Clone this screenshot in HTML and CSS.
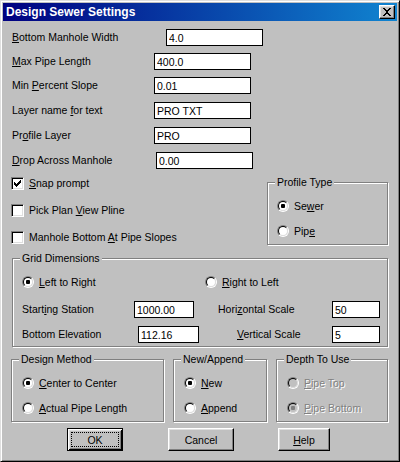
FILE: index.html
```html
<!DOCTYPE html>
<html>
<head>
<meta charset="utf-8">
<title>Design Sewer Settings</title>
<link rel="stylesheet" href="styles.css">
</head>
<body>
<div class="window">
  <div class="titlebar">
    <span class="title">Design Sewer Settings</span>
    <span class="close"><svg width="10" height="8" viewBox="0 0 10 8"><path d="M1 0h2v1h1v1h2v-1h1v-1h2v1h-1v1h-1v1h-1v2h1v1h1v1h1v1h-2v-1h-1v-1h-2v1h-1v1h-2v-1h1v-1h1v-1h1v-2h-1v-1h-1v-1h-1z" fill="#000"/></svg></span>
  </div>
  <div class="client">
    <div class="fields">
      <div class="frow"><span class="lbl lbl-a"><u>B</u>ottom Manhole Width</span><input class="tb" type="text" value="4.0"></div>
      <div class="frow"><span class="lbl"><u>M</u>ax Pipe Length</span><input class="tb" type="text" value="400.0"></div>
      <div class="frow"><span class="lbl">Min <u>P</u>ercent Slope</span><input class="tb" type="text" value="0.01"></div>
      <div class="frow loose"><span class="lbl">Layer name <u>f</u>or text</span><input class="tb" type="text" value="PRO TXT"></div>
      <div class="frow loose"><span class="lbl">Pr<u>o</u>file Layer</span><input class="tb" type="text" value="PRO"></div>
      <div class="frow loose"><span class="lbl lbl-c"><u>D</u>rop Across Manhole</span><input class="tb" type="text" value="0.00"></div>
    </div>

    <div class="mid">
      <div class="checks">
        <div class="chk"><span class="cbox"><svg width="7" height="7" viewBox="0 0 7 7"><path d="M0 2h1v3H0z M1 3h1v3H1z M2 4h1v3H2z M3 3h1v3H3z M4 2h1v3H4z M5 1h1v3H5z M6 0h1v3H6z" fill="#000"/></svg></span><span><u>S</u>nap prompt</span></div>
        <div class="chk"><span class="cbox"></span><span>Pick Plan <u>V</u>iew Pline</span></div>
        <div class="chk"><span class="cbox"></span><span>Manhole Bottom <u>A</u>t Pipe Slopes</span></div>
      </div>
      <div class="group profile">
        <div class="legend">Profile Type</div>
        <div class="opt o1"><span class="radio"><span class="ring"><span class="dot"></span></span></span><span>Se<u>w</u>er</span></div>
        <div class="opt o2"><span class="radio"><span class="ring"></span></span><span>Pip<u>e</u></span></div>
      </div>
    </div>

    <div class="group grid">
      <div class="legend">Grid Dimensions</div>
      <div class="grow o1">
        <div class="opt gopt"><span class="radio"><span class="ring"><span class="dot"></span></span></span><span><u>L</u>eft to Right</span></div>
        <div class="opt"><span class="radio"><span class="ring"></span></span><span><u>R</u>ight to Left</span></div>
      </div>
      <div class="grow g2">
        <span class="gl gl1">Start<u>i</u>ng Station</span><input class="tb tb-ss" type="text" value="1000.00">
        <span class="gl gl2">Hori<u>z</u>ontal Scale</span><input class="tb tb-sc" type="text" value="50">
      </div>
      <div class="grow g3">
        <span class="gl gl3">Bottom Elevation</span><input class="tb tb-be" type="text" value="112.16">
        <span class="gl gl4"><u>V</u>ertical Scale</span><input class="tb tb-sc" type="text" value="5">
      </div>
    </div>

    <div class="bgroups">
      <div class="group bg dm">
        <div class="legend">Design Method</div>
        <div class="opt o1"><span class="radio"><span class="ring"><span class="dot"></span></span></span><span><u>C</u>enter to Center</span></div>
        <div class="opt o2"><span class="radio"><span class="ring"></span></span><span><u>A</u>ctual Pipe Length</span></div>
      </div>
      <div class="group bg na">
        <div class="legend">New/Append</div>
        <div class="opt o1"><span class="radio"><span class="ring"><span class="dot"></span></span></span><span><u>N</u>ew</span></div>
        <div class="opt o2"><span class="radio"><span class="ring"></span></span><span><u>A</u>ppend</span></div>
      </div>
      <div class="group bg du">
        <div class="legend">Depth To Use</div>
        <div class="opt o1 dis"><span class="radio"><span class="ring"></span></span><span><u>P</u>ipe Top</span></div>
        <div class="opt o2 dis"><span class="radio"><span class="ring"><span class="dot"></span></span></span><span><u>P</u>ipe Bottom</span></div>
      </div>
    </div>

    <div class="buttons">
      <div class="btn ok"><span class="focus">OK</span></div>
      <div class="btn cancel">Cancel</div>
      <div class="btn help"><span><u>H</u>elp</span></div>
    </div>
  </div>
</div>
</body>
</html>
```
FILE: styles.css
```css
* { box-sizing: border-box; }

body {
  margin: 0;
  background: #c0c0c0;
  font-family: "Liberation Sans", Arial, sans-serif;
  font-size: 10.5px;
  color: #000;
}

u { text-decoration: underline; text-underline-offset: 1px; }

.window {
  width: 400px;
  height: 462px;
  border: 1px solid;
  border-color: #dfdfdf #000 #000 #dfdfdf;
  box-shadow: inset 1px 1px #fff, inset -1px -1px #808080;
  padding: 2px;
  background: #c0c0c0;
}

.titlebar {
  height: 18px;
  margin-bottom: 1px;
  display: flex;
  align-items: center;
  justify-content: space-between;
  background: linear-gradient(90deg, #000080, #1084d0);
}

.title {
  color: #fff;
  font-weight: bold;
  font-size: 12px;
  line-height: 18px;
  padding-left: 3px;
}

.close {
  width: 16px;
  height: 14px;
  margin-right: 2px;
  background: #c0c0c0;
  border: 1px solid;
  border-color: #fff #000 #000 #fff;
  box-shadow: inset -1px -1px #808080, inset 1px 1px #dfdfdf;
  display: flex;
  align-items: center;
  justify-content: center;
}

.client {
  padding: 7px 9px 0 8px;
}

/* text field rows */
.fields { display: flex; flex-direction: column; }
.frow { display: flex; align-items: center; height: 17px; margin-bottom: 7px; }
.frow.loose { margin-top: 1px; }
.lbl { width: 142px; margin-left: 1px; line-height: 13px; }
.lbl-a { width: 154px; }
.lbl-c { width: 144px; }

.tb {
  width: 97px;
  height: 17px;
  margin: 0;
  padding: 0 2px;
  border: 1px solid #000;
  background: #fff;
  font: inherit;
  color: #000;
  outline: none;
  flex: none;
}

/* checkboxes + profile type */
.mid {
  display: flex;
  justify-content: space-between;
  align-items: flex-start;
  margin-top: 1px;
}
.checks { display: flex; flex-direction: column; gap: 14px; }
.chk { display: flex; align-items: center; height: 13px; line-height: 13px; }
.cbox {
  width: 13px;
  height: 13px;
  flex: none;
  margin-right: 5px;
  border: 1px solid;
  border-color: #808080 #fff #fff #808080;
  box-shadow: inset 1px 1px #000, inset -1px -1px #dfdfdf;
  background: #fff;
  display: flex;
  align-items: center;
  justify-content: center;
}

/* group boxes */
.group {
  border: 1px solid #808080;
  box-shadow: inset 1px 1px #fff, 1px 1px #fff;
}
.legend {
  display: table;
  height: 13px;
  line-height: 13px;
  margin: -7px 0 0 -2px;
  padding: 0 2px;
  background: #c0c0c0;
}
.bg .legend { margin-left: -3px; }

.profile { width: 121px; height: 63px; margin-top: 5px; padding-left: 9px; }

.opt { display: flex; align-items: center; height: 14px; line-height: 13px; }
.o1 { margin-top: 10px; }
.o2 { margin-top: 11px; }

.radio {
  width: 12px;
  height: 12px;
  flex: none;
  margin-right: 5px;
  border-radius: 50%;
  border: 1px solid;
  border-color: #808080 #fff #fff #808080;
}
.ring {
  width: 10px;
  height: 10px;
  border-radius: 50%;
  border: 1px solid;
  border-color: #000 #dfdfdf #dfdfdf #000;
  background: #fff;
  display: flex;
  align-items: center;
  justify-content: center;
}
.dot { width: 4px; height: 4px; border-radius: 1px; background: #000; }

.dis { color: #808080; text-shadow: 1px 1px 0 #fff; }
.dis .ring { background: #c0c0c0; }
.dis .dot { background: #808080; }

/* grid dimensions */
.grid { margin: 13px 0 0 1px; height: 89px; padding-left: 9px; }
.grow { display: flex; align-items: center; }
.gopt { width: 183px; }
.g2 { margin-top: 12px; }
.g3 { margin-top: 8px; }
.gl { line-height: 13px; flex: none; }
.gl1 { width: 112px; }
.gl2 { width: 114px; margin-left: 24px; }
.gl3 { width: 116px; }
.gl4 { width: 95px; margin-left: 38px; }
.tb-ss { width: 60px; }
.tb-be { width: 61px; }
.tb-sc { width: 48px; }

/* bottom groups */
.bgroups { display: flex; gap: 9px; margin-top: 12px; }
.bg { height: 63px; padding-left: 10px; }
.dm { width: 153px; }
.na { width: 94px; }
.du { width: 112px; }

/* buttons */
.buttons { display: flex; margin-top: 6px; }
.btn {
  height: 23px;
  display: flex;
  align-items: center;
  justify-content: center;
  background: #c0c0c0;
  border: 1px solid;
  border-color: #fff #000 #000 #fff;
  box-shadow: inset -1px -1px #808080, inset 1px 1px #dfdfdf;
}
.ok {
  width: 56px;
  margin-left: 56px;
  padding: 3px;
  border-color: #000;
  box-shadow: inset 1px 1px #fff, inset -1px -1px #000, inset 2px 2px #dfdfdf, inset -2px -2px #808080;
}
.focus {
  flex: 1;
  align-self: stretch;
  display: flex;
  align-items: center;
  justify-content: center;
  border: 1px dotted #000;
}
.cancel { width: 66px; margin-left: 45px; }
.help { width: 52px; margin-left: 44px; }
```
